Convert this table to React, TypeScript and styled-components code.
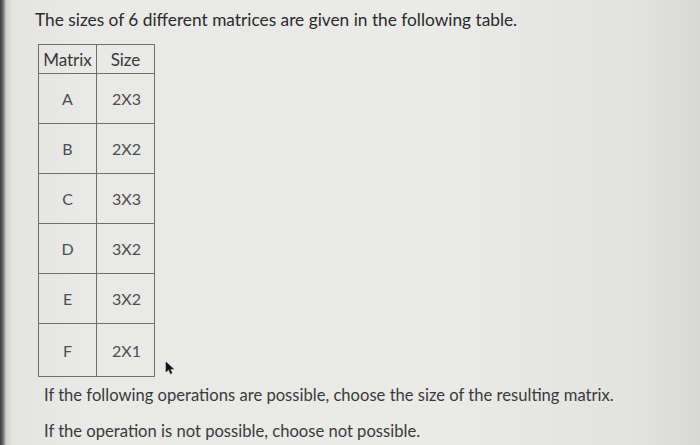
import { createGlobalStyle, styled } from "styled-components";

const MATRICES = [
  { name: "A", size: "2X3" },
  { name: "B", size: "2X2" },
  { name: "C", size: "3X3" },
  { name: "D", size: "3X2" },
  { name: "E", size: "3X2" },
  { name: "F", size: "2X1" },
];

const GlobalStyle = createGlobalStyle`
  html, body {
    margin: 0;
    padding: 0;
  }
  body {
    width: 700px;
    height: 445px;
    overflow: hidden;
    font-family: Lato, "Open Sans", "Liberation Sans", sans-serif;
  }
`;

export default function App() {
  return (
    <>
      <GlobalStyle />
      <Screen>
        <Title>The sizes of 6 different matrices are given in the following table.</Title>
        <SizeTable>
          <thead>
            <tr>
              <HeadCell>Matrix</HeadCell>
              <HeadCell>Size</HeadCell>
            </tr>
          </thead>
          <tbody>
            {MATRICES.map((m, i) => (
              <Row key={m.name} $last={i === MATRICES.length - 1}>
                <Cell>{m.name}</Cell>
                <Cell $shift>{m.size}</Cell>
              </Row>
            ))}
          </tbody>
        </SizeTable>
        <Prompt>
          <p>If the following operations are possible, choose the size of the resulting matrix.</p>
          <p>If the operation is not possible, choose not possible.</p>
        </Prompt>
        <Pointer viewBox="0 0 10 14" width="10" height="14">
          <path d="M1 1 L1 11 L3.6 8.6 L5.6 12.8 L7 12.1 L5.1 8 L8.6 8 Z" fill="#111" stroke="#222" strokeWidth="0.6" />
        </Pointer>
      </Screen>
    </>
  );
}

const Screen = styled.main`
  position: relative;
  box-sizing: border-box;
  width: 700px;
  height: 445px;
  padding: 9px 0 0 35px;
  background: linear-gradient(
    90deg,
    #3a3a3a 0px,
    #6b6b6a 3px,
    #cfcfcd 6px,
    #e4e4e2 12px,
    #e9e9e7 80px,
    #eaeae8 450px,
    #e2e2df 640px,
    #d8d8d4 700px
  );
`;

const Title = styled.h1`
  margin: 0 0 13px;
  font-size: 17.3px;
  line-height: 22px;
  font-weight: 400;
  color: #2a2a2a;
`;

const SizeTable = styled.table`
  margin-left: 3px;
  border-collapse: collapse;
  table-layout: fixed;
  color: #4e4e4e;
`;

const HeadCell = styled.th`
  width: 57px;
  height: 28px;
  padding: 0;
  border: 1px solid #6e6e6e;
  font-size: 17px;
  font-weight: 400;
  color: #383838;
  text-align: center;
`;

const Row = styled.tr<{ $last?: boolean }>`
  height: ${({ $last }) => ($last ? "53px" : "50px")};
`;

const Cell = styled.td<{ $shift?: boolean }>`
  padding: 0 0 0 ${({ $shift }) => ($shift ? "2px" : "0")};
  border: 1px solid #6e6e6e;
  font-size: 16px;
  text-align: center;
  vertical-align: middle;
`;

const Prompt = styled.section`
  padding-left: 9px;
  color: #3a3a3a;
  font-size: 16.6px;
  line-height: 36px;

  p {
    margin: 0;
  }
`;

const Pointer = styled.svg`
  position: absolute;
  left: 165px;
  top: 361px;
`;
